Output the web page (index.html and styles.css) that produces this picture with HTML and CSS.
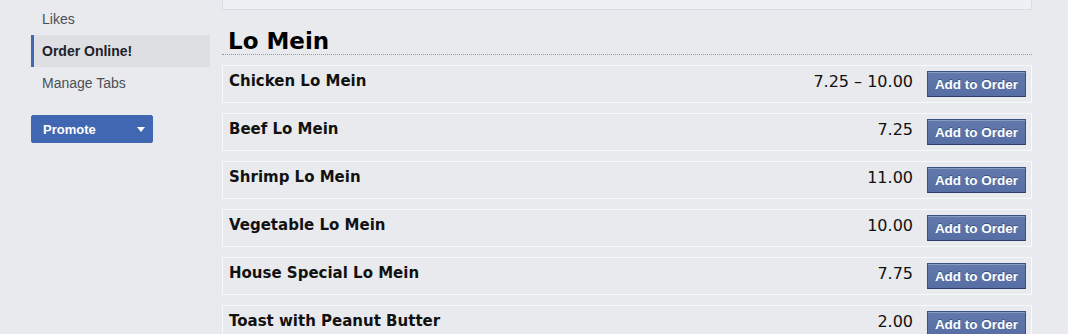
FILE: index.html
```html
<!DOCTYPE html>
<html lang="en">
<head>
  <meta charset="UTF-8" />
  <title>Order Online - Lo Mein</title>
  <link rel="stylesheet" href="styles.css">
</head>
<body>

  <div class="page">
    <aside class="sidebar">
      <ul class="side-nav">
        <li><a href="#">Likes</a></li>
        <li class="active"><a href="#">Order Online!</a></li>
        <li><a href="#">Manage Tabs</a></li>
      </ul>
      <button class="promote" type="button">
        <span>Promote</span>
        <span class="caret"></span>
      </button>
    </aside>

    <main class="content">
      <div class="top-box"></div>

      <h2 class="section-title">Lo Mein</h2>

      <div class="menu-list">
        <div class="menu-item">
          <span class="item-name">Chicken Lo Mein</span>
          <span class="item-price">7.25 – 10.00</span>
          <button class="add-btn" type="button">Add to Order</button>
        </div>
        <div class="menu-item">
          <span class="item-name">Beef Lo Mein</span>
          <span class="item-price">7.25</span>
          <button class="add-btn" type="button">Add to Order</button>
        </div>
        <div class="menu-item">
          <span class="item-name">Shrimp Lo Mein</span>
          <span class="item-price">11.00</span>
          <button class="add-btn" type="button">Add to Order</button>
        </div>
        <div class="menu-item">
          <span class="item-name">Vegetable Lo Mein</span>
          <span class="item-price">10.00</span>
          <button class="add-btn" type="button">Add to Order</button>
        </div>
        <div class="menu-item">
          <span class="item-name">House Special Lo Mein</span>
          <span class="item-price">7.75</span>
          <button class="add-btn" type="button">Add to Order</button>
        </div>
        <div class="menu-item">
          <span class="item-name">Toast with Peanut Butter</span>
          <span class="item-price">2.00</span>
          <button class="add-btn" type="button">Add to Order</button>
        </div>
      </div>
    </main>
  </div>

</body>
</html>
```

FILE: styles.css
```css
body {
  margin: 0;
  padding: 0;
  background-color: #e9eaed;
  font-family: 'Liberation Sans', Arial, sans-serif;
  overflow: hidden;
}

.page {
  display: flex;
  align-items: flex-start;
}

/* sidebar */
.sidebar {
  width: 179px;
  margin-left: 31px;
  padding-top: 3px;
}

.side-nav {
  list-style: none;
  margin: 0;
  padding: 0;
}

.side-nav li a {
  display: block;
  height: 32px;
  line-height: 32px;
  padding-left: 8px;
  border-left: 3px solid transparent;
  color: #4b4f56;
  font-size: 14px;
  text-decoration: none;
}

.side-nav li.active a {
  background-color: #dddfe2;
  border-left-color: #4267b2;
  color: #1d2129;
  font-weight: bold;
}

.promote {
  display: flex;
  align-items: center;
  justify-content: space-between;
  width: 122px;
  height: 28px;
  margin-top: 16px;
  padding: 0 7px 0 11px;
  background-color: #4267b2;
  border: 1px solid #4267b2;
  border-radius: 2px;
  color: white;
  font-family: 'Liberation Sans', Arial, sans-serif;
  font-size: 13px;
  font-weight: bold;
  cursor: pointer;
}

.caret {
  width: 0;
  height: 0;
  border-left: 4.5px solid transparent;
  border-right: 4.5px solid transparent;
  border-top: 5px solid white;
}

/* main column */
.content {
  width: 810px;
  margin-left: 12px;
}

.top-box {
  height: 10px;
  margin-top: -1px;
  background-color: #edf0f5;
  border: 1px solid #d8dce3;
  border-top: none;
}

.section-title {
  margin: 0;
  padding: 17px 0 0 6px;
  height: 27px;
  border-bottom: 1px dotted #9a9a9a;
  font-family: 'DejaVu Sans', sans-serif;
  font-size: 23px;
  font-weight: bold;
  color: #000;
  line-height: 28px;
}

.menu-list {
  padding-top: 10px;
}

.menu-item {
  display: flex;
  align-items: center;
  height: 36px;
  margin-bottom: 10px;
  padding: 0 5px 0 6px;
  border: 1px solid #f8f9fa;
}

.item-name {
  flex: 1;
  align-self: flex-start;
  padding-top: 6px;
  font-family: 'DejaVu Sans', sans-serif;
  font-size: 15px;
  font-weight: bold;
  color: #111;
}

.item-price {
  align-self: flex-start;
  padding-top: 6px;
  margin-right: 14px;
  font-family: 'DejaVu Sans', sans-serif;
  font-size: 16px;
  color: #111;
}

.add-btn {
  width: 99px;
  height: 26px;
  margin-top: 0;
  padding: 0;
  background: linear-gradient(#6279ac, #566ea3);
  border: 1px solid #3b5184;
  border-bottom-color: #2c3f6b;
  box-shadow: inset 0 1px 0 #8a9cc2;
  color: white;
  font-family: 'Liberation Sans', Arial, sans-serif;
  font-size: 13.5px;
  font-weight: bold;
  text-shadow: 0 -1px 0 #3b5184;
  cursor: pointer;
}
```
